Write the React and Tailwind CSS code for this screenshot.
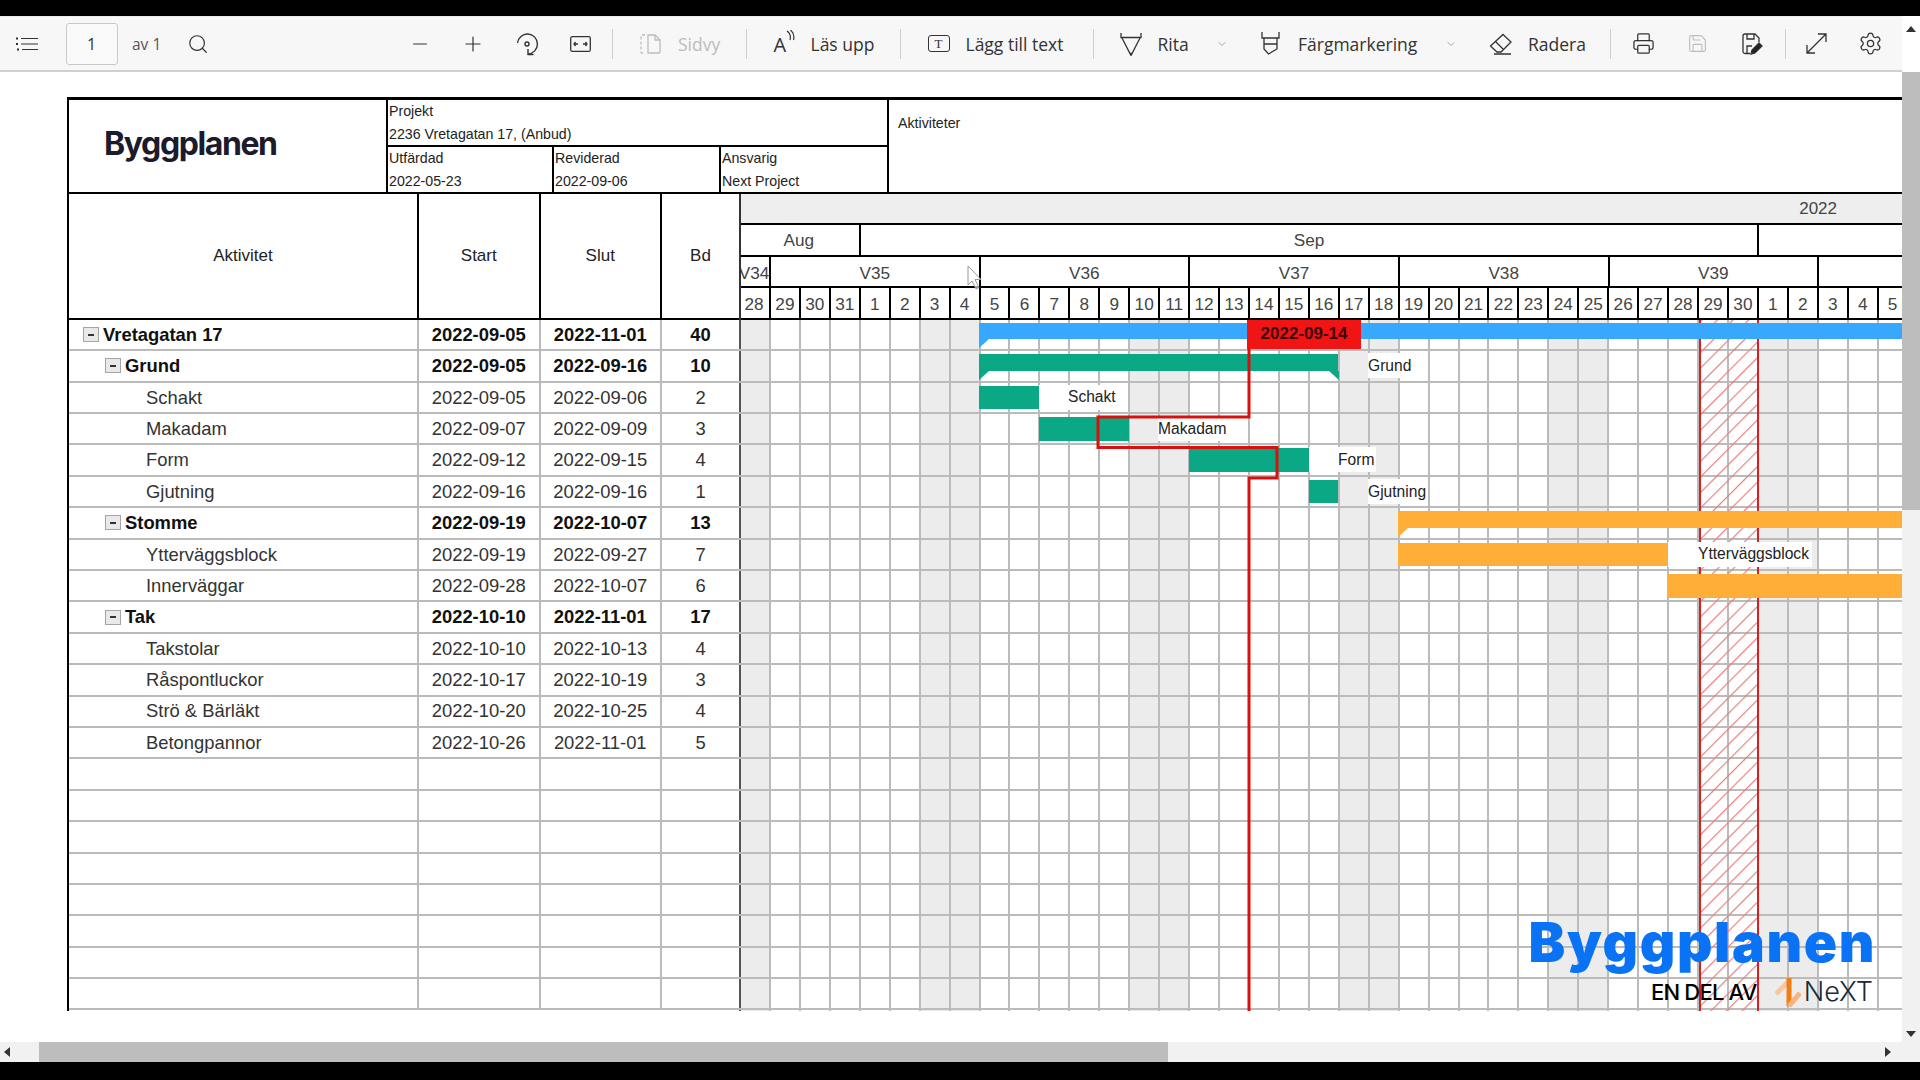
import React from 'react';
import { Search, Minus, Plus, ChevronDown, Printer, Save, Settings } from 'lucide-react';

const DAY = 29.95;
const ROW = 31.4;
const BAR_X = 0.5;

// 28 aug -> 5 okt, first day is a sunday
const days = [28, 29, 30, 31, ...Array.from({ length: 30 }, (_, i) => i + 1), 1, 2, 3, 4, 5];
const isWeekend = (i) => i % 7 === 0 || i % 7 === 6;

const weeks = [
  { label: 'V34', days: 1 },
  { label: 'V35', days: 7 },
  { label: 'V36', days: 7 },
  { label: 'V37', days: 7 },
  { label: 'V38', days: 7 },
  { label: 'V39', days: 7 },
  { label: '', days: 5 },
];

const months = [
  { label: 'Aug', days: 4 },
  { label: 'Sep', days: 30 },
  { label: '', days: 5 },
];

const rows = [
  { name: 'Vretagatan 17', level: 0, start: '2022-09-05', end: '2022-11-01', bd: 40 },
  { name: 'Grund', level: 1, start: '2022-09-05', end: '2022-09-16', bd: 10 },
  { name: 'Schakt', level: 2, start: '2022-09-05', end: '2022-09-06', bd: 2 },
  { name: 'Makadam', level: 2, start: '2022-09-07', end: '2022-09-09', bd: 3 },
  { name: 'Form', level: 2, start: '2022-09-12', end: '2022-09-15', bd: 4 },
  { name: 'Gjutning', level: 2, start: '2022-09-16', end: '2022-09-16', bd: 1 },
  { name: 'Stomme', level: 1, start: '2022-09-19', end: '2022-10-07', bd: 13 },
  { name: 'Ytterväggsblock', level: 2, start: '2022-09-19', end: '2022-09-27', bd: 7 },
  { name: 'Innerväggar', level: 2, start: '2022-09-28', end: '2022-10-07', bd: 6 },
  { name: 'Tak', level: 1, start: '2022-10-10', end: '2022-11-01', bd: 17 },
  { name: 'Takstolar', level: 2, start: '2022-10-10', end: '2022-10-13', bd: 4 },
  { name: 'Råspontluckor', level: 2, start: '2022-10-17', end: '2022-10-19', bd: 3 },
  { name: 'Strö & Bärläkt', level: 2, start: '2022-10-20', end: '2022-10-25', bd: 4 },
  { name: 'Betongpannor', level: 2, start: '2022-10-26', end: '2022-11-01', bd: 5 },
  ...Array.from({ length: 8 }, () => ({ name: '', level: 2, start: '', end: '', bd: '' })),
];

const BLUE = '#38a8fc';
const GREEN = '#0aa884';
const ORANGE = '#ffae38';

const bars = [
  { row: 0, from: 8, to: 40, color: BLUE, summary: true },
  { row: 1, from: 8, to: 20, color: GREEN, summary: true, endCap: true },
  { row: 2, from: 8, to: 10, color: GREEN },
  { row: 3, from: 10, to: 13, color: GREEN },
  { row: 4, from: 15, to: 19, color: GREEN },
  { row: 5, from: 19, to: 20, color: GREEN },
  { row: 6, from: 22, to: 40, color: ORANGE, summary: true },
  { row: 7, from: 22, to: 31, color: ORANGE },
  { row: 8, from: 31, to: 40, color: ORANGE },
];

const labels = [
  { text: 'Grund', row: 1, x: 629, w: 48, pad: 0 },
  { text: 'Schakt', row: 2, x: 300, w: 89, pad: 29 },
  { text: 'Makadam', row: 3, x: 419, w: 80, pad: 0 },
  { text: 'Form', row: 4, x: 570, w: 67, pad: 29 },
  { text: 'Gjutning', row: 5, x: 629, w: 60, pad: 0 },
  { text: 'Ytterväggsblock', row: 7, x: 929, w: 144, pad: 30 },
];

function Toolbar() {
  return (
    <div className="flex h-[54px] flex-none items-center border-t border-[#ececec] bg-[#f7f7f7] font-['Open_Sans',sans-serif] text-[17.500px] text-[#333]">
      <svg className="ml-4 flex-none" width="22" height="14" viewBox="0 0 22 14" fill="none" stroke="#333" strokeWidth="1.2">
        <path d="M5 1.500h17M5 7h17M6 12.500h16" />
        <path d="M0 1.500h2M0 7h2M1 12.500h2" strokeWidth="2" />
      </svg>
      <div className="ml-[27.500px] flex h-[42px] w-[52px] flex-none items-center justify-center rounded-[3px] border border-[#c9c9c9] bg-[#f9f9f9] text-[16px]">1</div>
      <div className="ml-[14.500px] w-[28px] flex-none whitespace-nowrap pt-[2px] text-[15.500px] text-[#555]">av 1</div>
      <Search className="ml-[27px] flex-none" size={22} strokeWidth={1.3} />
      <Minus className="ml-[200px] flex-none" size={22} strokeWidth={1.2} />
      <Plus className="ml-[30px] flex-none" size={24} strokeWidth={1.2} />
      <svg className="ml-[30px] flex-none" width="24" height="24" viewBox="0 0 24 24" fill="none" stroke="#333" strokeWidth="1.4">
        <path d="M2.500 11 A10 10 0 1 1 13 22" />
        <circle cx="12" cy="12" r="2" />
        <path d="M13 17v5.500h5.500" />
      </svg>
      <svg className="ml-[31px] flex-none" width="21" height="16" viewBox="0 0 21 16" fill="none" stroke="#333" strokeWidth="1.3">
        <rect x="0.700" y="0.700" width="19.600" height="14.600" rx="1.500" />
        <path d="M4 8h4M13 8h4M5.500 6 4 8l1.500 2M15.500 6 17 8l-1.500 2" />
      </svg>
      <div className="ml-[21px] h-[30px] w-px flex-none bg-[#cfcfcf]" />
      <svg className="ml-[27px] flex-none" width="21" height="20" viewBox="0 0 21 20" fill="none" stroke="#bdbdbd" strokeWidth="1.3">
        <path d="M5 1H2a1 1 0 0 0-1 1v16a1 1 0 0 0 1 1h3" strokeDasharray="3 2" />
        <path d="M8 1h7l5 5v12a1 1 0 0 1-1 1H8zM15 1v5h5" />
      </svg>
      <div className="ml-[17px] w-[43px] flex-none whitespace-nowrap pt-[2px] text-[#bcbcbc]">Sidvy</div>
      <div className="ml-[25px] h-[30px] w-px flex-none bg-[#cfcfcf]" />
      <div className="relative ml-[26.500px] h-[24px] w-[21px] flex-none">
        <span className="absolute bottom-[-1px] left-0 text-[20px] leading-[24px]">A</span>
        <svg className="absolute right-0 top-[-2px]" width="9" height="12" viewBox="0 0 9 12" fill="none" stroke="#333" strokeWidth="1.2">
          <path d="M1 1c3 2 4 5 3 9M4.500 0c3 2.500 4 6 3 10" />
        </svg>
      </div>
      <div className="ml-[16px] w-[64px] flex-none whitespace-nowrap pt-[2px]">Läs upp</div>
      <div className="ml-[25px] h-[30px] w-px flex-none bg-[#cfcfcf]" />
      <div className="ml-[27px] flex h-[17px] w-[22px] flex-none items-center justify-center rounded-[3px] border border-[#333] font-['Liberation_Serif',serif] text-[13px] leading-none">T</div>
      <div className="ml-[16px] w-[102px] flex-none whitespace-nowrap pt-[2px]">Lägg till text</div>
      <div className="ml-[25px] h-[30px] w-px flex-none bg-[#cfcfcf]" />
      <svg className="ml-[26px] flex-none" width="22" height="24" viewBox="0 0 22 24" fill="none" stroke="#333" strokeWidth="1.3">
        <path d="M1 1v4.500h20V1M2 6l8 15.500h2L20 6M10 21.500l1 2 1-2" />
      </svg>
      <div className="ml-[16px] w-[30px] flex-none whitespace-nowrap pt-[2px]">Rita</div>
      <ChevronDown className="ml-[28px] flex-none" size={12} strokeWidth={1.3} color="#777" />
      <svg className="ml-[33.500px] flex-none" width="19" height="24" viewBox="0 0 19 24" fill="none" stroke="#333" strokeWidth="1.3">
        <path d="M1 0v6h17V0M3 6v6h13V6M3 12v5l4.500 5 8.500-5v-5z" />
      </svg>
      <div className="ml-[18px] w-[117px] flex-none whitespace-nowrap pt-[2px]">Färgmarkering</div>
      <ChevronDown className="ml-[29.500px] flex-none" size={12} strokeWidth={1.3} color="#777" />
      <svg className="ml-[32.500px] flex-none" width="23" height="22" viewBox="0 0 23 22" fill="none" stroke="#333" strokeWidth="1.3">
        <path d="M14 1.500 22 9l-10 10H8l-6.500-6zM6 8l8 8M5 21h17" />
      </svg>
      <div className="ml-[16px] w-[56px] flex-none whitespace-nowrap pt-[2px]">Radera</div>
      <div className="ml-[26px] h-[30px] w-px flex-none bg-[#cfcfcf]" />
      <Printer className="ml-[21px] flex-none" size={23} strokeWidth={1.3} />
      <Save className="ml-[32px] flex-none" size={21} strokeWidth={1.3} color="#bdbdbd" />
      <svg className="ml-[34px] flex-none" width="21" height="22" viewBox="0 0 21 22" fill="none" stroke="#333" strokeWidth="1.3">
        <path d="M8 20.500H3a2 2 0 0 1-2-2V3a2 2 0 0 1 2-2h10l4 4v4M5 1v5h7V1M5 20v-7h5" />
        <path d="M9 21l1-4 7-7 3 3-7 7z" fill="#222" />
      </svg>
      <div className="ml-[22px] h-[30px] w-px flex-none bg-[#cfcfcf]" />
      <svg className="ml-[20px] flex-none" width="21" height="21" viewBox="0 0 21 21" fill="none" stroke="#333" strokeWidth="1.3">
        <path d="M1.500 19.500 19.500 1.500M12 1h8v8M1 12v8h8" />
      </svg>
      <Settings className="ml-[31px] flex-none" size={25} strokeWidth={1.2} />
    </div>
  );
}

function TreeBox() {
  return (
    <span className="mr-[4px] flex h-[15px] w-[16px] flex-none items-center justify-center border border-[#a5a5a5] bg-[#e9e9e9]">
      <span className="h-[2px] w-[6px] bg-[#333]" />
    </span>
  );
}

function LeftTable() {
  return (
    <div className="w-[672px] flex-none border-l-2 border-black">
      <div className="flex h-[126.400px] border-b-2 border-black text-[17px] text-[#222]">
        <div className="flex w-[348px] flex-none items-center justify-center">Aktivitet</div>
        <div className="flex w-[121.500px] flex-none items-center justify-center border-l-2 border-black">Start</div>
        <div className="flex w-[121.500px] flex-none items-center justify-center border-l-2 border-black">Slut</div>
        <div className="flex w-[79px] flex-none items-center justify-center border-l-2 border-black">Bd</div>
      </div>
      {rows.map((r, i) => {
        const bold = r.level < 2 ? 'font-bold text-[#111]' : 'text-[#333]';
        const pad = r.level === 0 ? 'pl-[14px]' : r.level === 1 ? 'pl-[36px]' : 'pl-[77px]';
        return (
          <div key={i} className={`flex h-[31.400px] border-b-2 border-[#bbbbbb] text-[18.400px] ${bold}`}>
            <div className={`flex w-[348px] flex-none items-center whitespace-nowrap ${pad}`}>
              {r.level < 2 && <TreeBox />}
              {r.name}
            </div>
            <div className="flex w-[121.500px] flex-none items-center justify-center border-l-2 border-[#bbbbbb]">{r.start}</div>
            <div className="flex w-[121.500px] flex-none items-center justify-center border-l-2 border-[#bbbbbb]">{r.end}</div>
            <div className="flex w-[79px] flex-none items-center justify-center border-l-2 border-[#bbbbbb]">{r.bd}</div>
          </div>
        );
      })}
    </div>
  );
}

function Summary({ bar }) {
  const left = bar.from * DAY + BAR_X;
  const width = (bar.to - bar.from) * DAY;
  const top = bar.row * ROW + 3;
  return (
    <>
      <div className="absolute h-[16.500px]" style={{ left, width, top, background: bar.color }} />
      <svg className="absolute" width="10" height="9" style={{ left, top: top + 16.5 }}>
        <path d="M0 0h10L0 9z" fill={bar.color} />
      </svg>
      {bar.endCap && (
        <svg className="absolute" width="10" height="9" style={{ left: left + width - 10, top: top + 16.5 }}>
          <path d="M0 0h10v9z" fill={bar.color} />
        </svg>
      )}
    </>
  );
}

function Chart() {
  return (
    <div className="relative h-[690.800px] overflow-hidden">
      {/* weekend columns and vertical grid */}
      <div className="absolute inset-0 flex">
        {days.map((_, i) => (
          <div
            key={i}
            className={`h-full w-[29.950px] flex-none border-l-2 ${i === 0 ? 'border-[#555555]' : 'border-[#bbbbbb]'} ${isWeekend(i) ? 'bg-[#ececec]' : 'bg-white'}`}
          />
        ))}
      </div>
      <div className="absolute inset-0 flex flex-col">
        {rows.map((_, i) => (
          <div key={i} className="h-[31.400px] flex-none border-b-2 border-[#bbbbbb]" />
        ))}
      </div>

      {/* semester hatch */}
      <svg className="absolute left-[960px] top-0 border-x-2 border-[#d92020]" width="60" height="691">
        <defs>
          <pattern id="hatch" width="11" height="11" patternUnits="userSpaceOnUse" patternTransform="rotate(45)">
            <line x1="0" y1="0" x2="0" y2="11" stroke="#e97f7f" strokeWidth="2.400" />
          </pattern>
        </defs>
        <rect width="60" height="691" fill="url(#hatch)" />
      </svg>

      {bars.map((b, i) =>
        b.summary ? (
          <Summary key={i} bar={b} />
        ) : (
          <div
            key={i}
            className="absolute h-[23.600px]"
            style={{ left: b.from * DAY + BAR_X, width: (b.to - b.from) * DAY, top: b.row * ROW + 3, background: b.color }}
          />
        )
      )}

      {labels.map((l) => (
        <div
          key={l.text}
          className="absolute flex h-[25px] items-center whitespace-nowrap bg-white text-[15.600px] text-[#222]"
          style={{ left: l.x, width: l.w, top: l.row * ROW + 2, paddingLeft: l.pad }}
        >
          {l.text}
        </div>
      ))}

      {/* critical path */}
      <svg className="absolute inset-0" width="1163" height="691" fill="none">
        <path d="M510 29V97H359V127.500H538V158H510V691" stroke="#d81010" strokeWidth="3" />
      </svg>
      <div className="absolute left-[508px] top-[-1px] flex h-[30px] w-[114px] items-center justify-center bg-[#f01414] text-[17px] font-bold text-[#3d0606]">
        2022-09-14
      </div>

      {/* logo on top of the page */}
      <div className="absolute left-[787px] top-[588.500px] w-[350px] text-right">
        <div className="font-['Inter',sans-serif] text-[55px] font-black leading-[68px] tracking-[1.600px] text-[#0a72f5]">Byggplanen</div>
        <div className="mt-[-0.500px] flex items-center justify-end pr-[3px]">
          <span className="mr-[18px] font-['Inter',sans-serif] text-[22px] font-medium leading-[30px] tracking-[-0.800px] text-black">EN DEL AV</span>
          <svg className="mr-[3px]" width="26" height="32" viewBox="0 0 26 32" fill="none">
            <path d="M1 18 13 6" stroke="#f7c6a0" strokeWidth="5" />
            <path d="M14 2v28" stroke="#f47c14" strokeWidth="5" />
            <path d="M14 30 25 17" stroke="#f9b27a" strokeWidth="5" />
          </svg>
          <span className="font-['Inter',sans-serif] text-[27px] font-light leading-[30px] text-[#172a3a]">NeXT</span>
        </div>
      </div>
    </div>
  );
}

function Gantt() {
  return (
    <div className="relative w-[1163px] flex-none overflow-hidden">
      <div className="flex h-[31.600px] items-center justify-end border-b-2 border-black bg-[#eeeeee] pr-[65px] text-[17px] text-[#444]">2022</div>
      <div className="flex h-[31.600px] border-b-2 border-black text-[17.200px] text-[#444]">
        {months.map((m, i) => (
          <div
            key={i}
            className={`flex flex-none items-center justify-center border-black pt-[3px] ${i > 0 ? 'border-l-2' : ''}`}
            style={{ width: m.days * DAY }}
          >
            {m.label}
          </div>
        ))}
      </div>
      <div className="flex h-[31.600px] border-b-2 border-black text-[17.200px] text-[#444]">
        {weeks.map((w, i) => (
          <div
            key={i}
            className={`flex flex-none items-center justify-center whitespace-nowrap border-black pt-[4px] ${i > 0 ? 'border-l-2' : ''}`}
            style={{ width: w.days * DAY }}
          >
            {w.label}
          </div>
        ))}
      </div>
      <div className="flex h-[31.600px] border-b-2 border-black text-[17.200px] text-[#444]">
        {days.map((d, i) => (
          <div key={i} className={`flex w-[29.950px] flex-none items-center justify-center border-black pt-[3px] ${i > 0 ? 'border-l-2' : ''}`}>
            {d}
          </div>
        ))}
      </div>
      {/* left edge of the header block */}
      <div className="absolute left-0 top-0 h-[126px] w-[2px] bg-[#333]" />
      {/* mouse pointer */}
      <svg className="absolute left-[228px] top-[71px]" width="16" height="26" viewBox="0 0 16 26" fill="#ffffff" fillOpacity="0.6" stroke="#9a9a9a">
        <path d="M1 1v19l4-4 4 8 3-1.500-4-8h6z" />
      </svg>
      <Chart />
    </div>
  );
}

function DocHeader() {
  return (
    <div className="flex h-[96.500px] border-y-[2px] border-t-[3px] border-l-2 border-black text-[14.200px] leading-[22.500px] text-[#222]">
      <div className="flex w-[319px] flex-none items-center border-r-2 border-black pb-[3px] pl-[35px] font-['Inter',sans-serif] text-[32px] font-bold tracking-[-1.400px] text-[#1b1b2b]">
        Byggplanen
      </div>
      <div className="flex w-[501px] flex-none flex-col border-r-2 border-black">
        <div className="h-[46.500px] flex-none border-b-2 border-black pl-[1px]">
          Projekt
          <br />
          2236 Vretagatan 17, (Anbud)
        </div>
        <div className="flex flex-1 pt-[0.500px]">
          <div className="w-[166px] flex-none border-r-2 border-black pl-[1px]">
            Utfärdad
            <br />
            2022-05-23
          </div>
          <div className="w-[167px] flex-none border-r-2 border-black pl-[1px]">
            Reviderad
            <br />
            2022-09-06
          </div>
          <div className="flex-1 pl-[1px]">
            Ansvarig
            <br />
            Next Project
          </div>
        </div>
      </div>
      <div className="pl-[9px] pt-[12px]">Aktiviteter</div>
    </div>
  );
}

export default function App() {
  return (
    <div className="flex h-screen w-[1920px] flex-col overflow-hidden bg-black">
      <div className="h-4 flex-none" />
      <div className="flex h-[1026px] flex-none">
        <div className="flex w-[1902px] flex-none flex-col bg-white">
          <Toolbar />
          <div className="h-[2px] flex-none bg-[#d0d0d0]" />
          <div className="ml-[67px] mt-[25px] w-[1835px] font-['Liberation_Sans',Arial,sans-serif]">
            <DocHeader />
            <div className="flex">
              <LeftTable />
              <Gantt />
            </div>
          </div>
        </div>
        {/* vertical scrollbar */}
        <div className="relative flex w-[18px] flex-none flex-col bg-[#f1f1f1]">
          <div className="flex h-[56px] flex-none justify-center bg-white pt-[10px]">
            <div className="h-0 w-0 border-x-[5px] border-b-[6px] border-x-transparent border-b-[#333]" />
          </div>
          <div className="h-[438px] flex-none bg-[#bdbdbd]" />
          <div className="absolute bottom-[5px] left-[4px] h-0 w-0 border-x-[5px] border-t-[6px] border-x-transparent border-t-[#333]" />
        </div>
      </div>
      {/* horizontal scrollbar */}
      <div className="flex h-[20px] flex-none items-center bg-[#f1f1f1]">
        <div className="ml-[4px] h-0 w-0 border-y-[5px] border-r-[6px] border-y-transparent border-r-[#333]" />
        <div className="ml-[29px] h-full w-[1129px] flex-none bg-[#bdbdbd]" />
        <div className="ml-[717px] h-0 w-0 border-y-[5px] border-l-[6px] border-y-transparent border-l-[#333]" />
      </div>
    </div>
  );
}
